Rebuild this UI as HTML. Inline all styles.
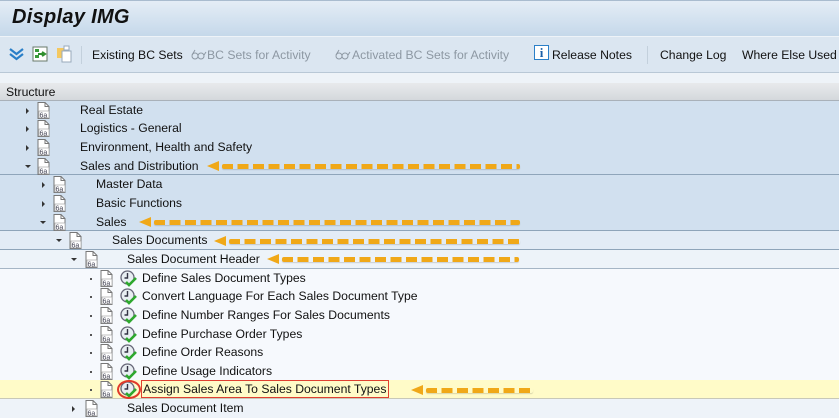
<!DOCTYPE html>
<html><head><meta charset="utf-8"><style>
*{margin:0;padding:0;box-sizing:border-box}
body{width:839px;height:418px;overflow:hidden;background:#f6f9fd;font-family:"Liberation Sans",sans-serif;font-size:12px;color:#111;position:relative}
.abs{position:absolute}
#title{left:0;top:0;width:839px;height:36px;background:linear-gradient(#e4edf6,#c5d8ea);border-top:1px solid #a9bccf}
#title span{position:absolute;left:12px;top:5px;font-size:20px;font-weight:bold;font-style:italic;color:#111;letter-spacing:.3px}
#tb{left:0;top:36px;width:839px;height:37px;background:#dbe6f1;border-top:1px solid #eef3f8;border-bottom:1px solid #b9c8d6}
.tbt{position:absolute;top:11px;font-size:12.2px;white-space:nowrap}
.dis{color:#8d98a3}
#gap{left:0;top:73px;width:839px;height:10px;background:#eef3f8}
#hdr{left:0;top:83px;width:839px;height:18px;background:linear-gradient(#e8eaec,#d4d8dc);border-bottom:1px solid #a9b1b9}
#hdr span{position:absolute;left:6px;top:2px;font-size:12.2px}
.row{position:absolute;left:0;width:839px;height:19px}
.row .t{position:absolute;top:2px;font-size:12.2px;white-space:nowrap}
.tri{position:absolute;top:7px;width:0;height:0}
.tr{border-left:3px solid #333;border-top:3px solid transparent;border-bottom:3px solid transparent}
.td{border-top:3px solid #333;border-left:3px solid transparent;border-right:3px solid transparent;top:8px}
.dot{position:absolute;top:9px;width:2px;height:2px;background:#555}
.doc{position:absolute;top:1px;width:14px;height:17px}
.clk{position:absolute;top:1px;width:17px;height:17px}
.arr{position:absolute;height:5px;background:repeating-linear-gradient(90deg,#f0a818 0 11px,transparent 11px 15.5px);border-radius:2px;box-shadow:0 1px 1px rgba(0,0,0,.15)}
.head{position:absolute;width:0;height:0;border-right:12px solid #f0a818;border-top:5px solid transparent;border-bottom:5px solid transparent}
.gl{position:absolute;top:12px}
</style></head><body>
<div id="title" class="abs"><span>Display IMG</span></div>
<div id="tb" class="abs">
<svg class="abs" style="left:9px;top:10px" width="15" height="14"><path d="M1 2 L7.5 7 L14 2 M1 7 L7.5 12 L14 7" stroke="#2a7fc8" stroke-width="2.2" fill="none"/></svg>
<svg class="abs" style="left:32px;top:9px" width="16" height="16"><rect x="1" y="1" width="14" height="14" fill="#fff" stroke="#6a7a6a"/><rect x="3" y="3" width="4" height="3" fill="#3a9a3a"/><rect x="3" y="9" width="4" height="3" fill="#3a9a3a"/><path d="M6 8h6M10 6l3 2-3 2" stroke="#2f8f2f" stroke-width="2" fill="none"/></svg>
<svg class="abs" style="left:56px;top:8px" width="16" height="18"><rect x="1" y="3" width="8" height="10" fill="#f4c860"/><rect x="6" y="6" width="9" height="11" fill="#fff" stroke="#9ab"/><rect x="8" y="1" width="5" height="4" fill="#fff" stroke="#9ab"/></svg>
<div class="abs" style="left:81px;top:9px;width:1px;height:18px;background:#c3d0dc"></div>
<span class="tbt" style="left:92px">Existing BC Sets</span>
<svg class="gl" style="left:191px" width="16" height="12"><circle cx="4" cy="7" r="3" fill="none" stroke="#8d98a3"/><circle cx="10" cy="7" r="3" fill="none" stroke="#8d98a3"/><path d="M1 6 L4 1 M13 6 L15 3" stroke="#8d98a3" fill="none"/></svg>
<span class="tbt dis" style="left:207px">BC Sets for Activity</span>
<svg class="gl" style="left:335px" width="16" height="12"><circle cx="4" cy="7" r="3" fill="none" stroke="#8d98a3"/><circle cx="10" cy="7" r="3" fill="none" stroke="#8d98a3"/><path d="M1 6 L4 1 M13 6 L15 3" stroke="#8d98a3" fill="none"/></svg>
<span class="tbt dis" style="left:352px">Activated BC Sets for Activity</span>
<div class="abs" style="left:534px;top:8px;width:15px;height:15px;border:1px solid #2a7fc8;background:#fff;color:#1a5fa8;font:bold 13px 'Liberation Serif',serif;text-align:center;line-height:13px">i</div>
<span class="tbt" style="left:552px">Release Notes</span>
<div class="abs" style="left:647px;top:9px;width:1px;height:18px;background:#c3d0dc"></div>
<span class="tbt" style="left:660px">Change Log</span>
<span class="tbt" style="left:742px">Where Else Used</span>
</div>
<div id="gap" class="abs"></div>
<div id="hdr" class="abs"><span>Structure</span></div>

<div class="abs" style="left:0;top:101px;width:839px;height:129px;background:#d1e0ef"></div>
<div class="abs" style="left:0;top:174px;width:839px;height:1px;background:#8fa5ba"></div>
<div class="abs" style="left:0;top:230px;width:839px;height:1px;background:#8fa5ba"></div>
<div class="abs" style="left:0;top:231px;width:839px;height:18px;background:#e3ecf6"></div>
<div class="abs" style="left:0;top:249px;width:839px;height:1px;background:#8fa5ba"></div>
<div class="abs" style="left:0;top:250px;width:839px;height:18px;background:#edf3f9"></div>
<div class="abs" style="left:0;top:268px;width:839px;height:1px;background:#a5b5c5"></div>
<div class="abs" style="left:0;top:380px;width:839px;height:18px;background:#fffbc8"></div>
<div class="abs" style="left:0;top:398px;width:839px;height:1px;background:#c8c8b8"></div>
<div class="abs" style="left:0;top:399px;width:839px;height:19px;background:#eef3f9"></div>

<svg width="0" height="0" style="position:absolute"><defs>
<symbol id="d" viewBox="0 0 14 17"><path d="M1 .5h7l4 4v12H1z" fill="#fff" stroke="#777"/><path d="M8 .5v4h4" fill="none" stroke="#777"/><rect x="2" y="9" width="10" height="7" fill="#fff" stroke="#999" stroke-width=".6"/><text x="2.5" y="15.5" font-size="7" font-family="Liberation Sans" fill="#445">6a</text></symbol>
<symbol id="c" viewBox="0 0 17 17"><circle cx="7.5" cy="7.5" r="6.5" fill="#e8eef2" stroke="#667" stroke-width="1.3"/><path d="M7.5 3v5h-3" stroke="#334" stroke-width="1.4" fill="none"/><path d="M6 12l3 3 7-7" stroke="#2ea82e" stroke-width="2.6" fill="none"/></symbol>
</defs></svg>

<div class="row" style="top:101px"><div class="tri tr" style="left:26px"></div><svg class="doc" style="left:37px"><use href="#d"/></svg><span class="t" style="left:80px">Real Estate</span></div>
<div class="row" style="top:119px"><div class="tri tr" style="left:26px"></div><svg class="doc" style="left:37px"><use href="#d"/></svg><span class="t" style="left:80px">Logistics - General</span></div>
<div class="row" style="top:138px"><div class="tri tr" style="left:26px"></div><svg class="doc" style="left:37px"><use href="#d"/></svg><span class="t" style="left:80px">Environment, Health and Safety</span></div>
<div class="row" style="top:157px"><div class="tri td" style="left:25px"></div><svg class="doc" style="left:37px"><use href="#d"/></svg><span class="t" style="left:80px">Sales and Distribution</span></div>
<div class="row" style="top:175px"><div class="tri tr" style="left:42px"></div><svg class="doc" style="left:53px"><use href="#d"/></svg><span class="t" style="left:96px">Master Data</span></div>
<div class="row" style="top:194px"><div class="tri tr" style="left:42px"></div><svg class="doc" style="left:53px"><use href="#d"/></svg><span class="t" style="left:96px">Basic Functions</span></div>
<div class="row" style="top:213px"><div class="tri td" style="left:40px"></div><svg class="doc" style="left:53px"><use href="#d"/></svg><span class="t" style="left:96px">Sales</span></div>
<div class="row" style="top:231px"><div class="tri td" style="left:56px"></div><svg class="doc" style="left:69px"><use href="#d"/></svg><span class="t" style="left:112px">Sales Documents</span></div>
<div class="row" style="top:250px"><div class="tri td" style="left:71px"></div><svg class="doc" style="left:85px"><use href="#d"/></svg><span class="t" style="left:127px">Sales Document Header</span></div>
<div class="row" style="top:269px"><div class="dot" style="left:90px"></div><svg class="doc" style="left:100px"><use href="#d"/></svg><svg class="clk" style="left:120px"><use href="#c"/></svg><span class="t" style="left:142px">Define Sales Document Types</span></div>
<div class="row" style="top:287px"><div class="dot" style="left:90px"></div><svg class="doc" style="left:100px"><use href="#d"/></svg><svg class="clk" style="left:120px"><use href="#c"/></svg><span class="t" style="left:142px">Convert Language For Each Sales Document Type</span></div>
<div class="row" style="top:306px"><div class="dot" style="left:90px"></div><svg class="doc" style="left:100px"><use href="#d"/></svg><svg class="clk" style="left:120px"><use href="#c"/></svg><span class="t" style="left:142px">Define Number Ranges For Sales Documents</span></div>
<div class="row" style="top:325px"><div class="dot" style="left:90px"></div><svg class="doc" style="left:100px"><use href="#d"/></svg><svg class="clk" style="left:120px"><use href="#c"/></svg><span class="t" style="left:142px">Define Purchase Order Types</span></div>
<div class="row" style="top:343px"><div class="dot" style="left:90px"></div><svg class="doc" style="left:100px"><use href="#d"/></svg><svg class="clk" style="left:120px"><use href="#c"/></svg><span class="t" style="left:142px">Define Order Reasons</span></div>
<div class="row" style="top:362px"><div class="dot" style="left:90px"></div><svg class="doc" style="left:100px"><use href="#d"/></svg><svg class="clk" style="left:120px"><use href="#c"/></svg><span class="t" style="left:142px">Define Usage Indicators</span></div>
<div class="row" style="top:380px"><div class="dot" style="left:90px"></div><svg class="doc" style="left:100px"><use href="#d"/></svg><svg class="clk" style="left:120px"><use href="#c"/></svg>
<div class="abs" style="left:117px;top:0;width:24px;height:19px;border:2px solid #e03a2a;border-radius:50%"></div>
<div class="abs" style="left:141px;top:0;width:248px;height:18px;border:1px solid #e04030"></div>
<span class="t" style="left:143px">Assign Sales Area To Sales Document Types</span></div>
<div class="row" style="top:399px"><div class="tri tr" style="left:72px"></div><svg class="doc" style="left:85px"><use href="#d"/></svg><span class="t" style="left:127px">Sales Document Item</span></div>

<div class="head" style="left:207px;top:161px"></div><div class="arr" style="left:222px;top:164px;width:298px"></div>
<div class="head" style="left:139px;top:217px"></div><div class="arr" style="left:154px;top:220px;width:366px"></div>
<div class="head" style="left:214px;top:236px"></div><div class="arr" style="left:229px;top:239px;width:291px"></div>
<div class="head" style="left:267px;top:254px"></div><div class="arr" style="left:282px;top:257px;width:237px"></div>
<div class="head" style="left:411px;top:385px"></div><div class="arr" style="left:426px;top:388px;width:107px"></div>
</body></html>
